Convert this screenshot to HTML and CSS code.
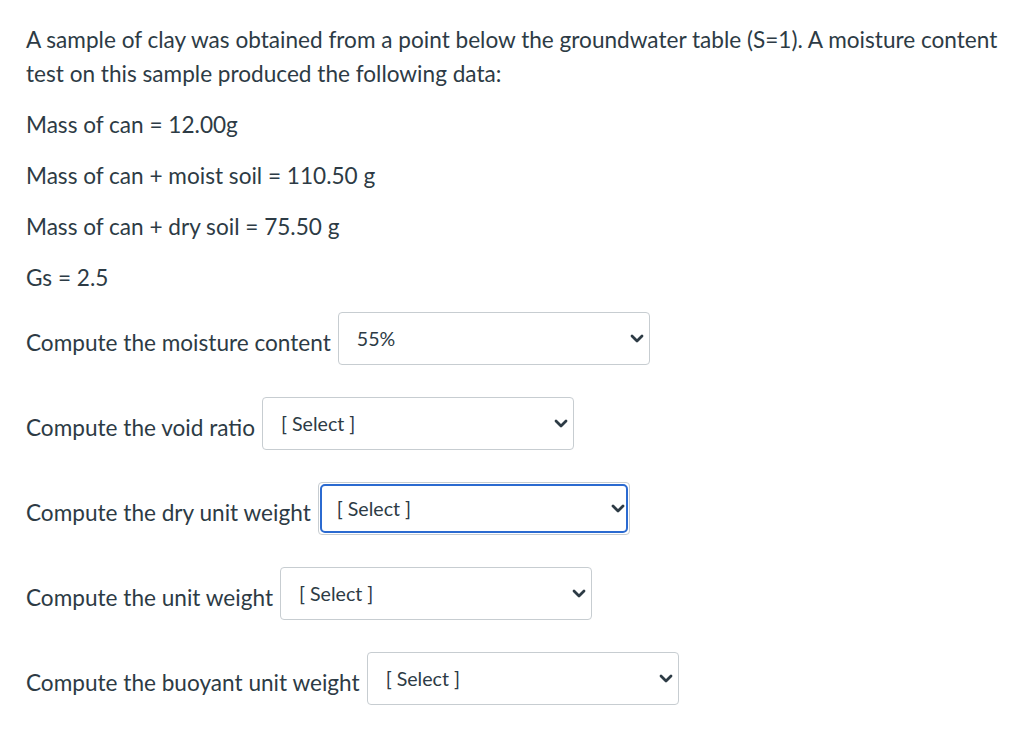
FILE: index.html
```html
<!DOCTYPE html>
<html lang="en">
<head>
<meta charset="utf-8">
<title>Question</title>
<link rel="stylesheet" href="styles.css">
</head>
<body>
<div class="question">
  <p class="para">A sample of clay was obtained from a point below the groundwater table (S=1). A moisture content test on this sample produced the following data:</p>
  <p class="para">Mass of can = 12.00g</p>
  <p class="para">Mass of can + moist soil = 110.50 g</p>
  <p class="para">Mass of can + dry soil = 75.50 g</p>
  <p class="para">Gs = 2.5</p>

  <div class="rows">
    <div class="row">
      <span class="label">Compute the moisture content</span>
      <div class="pick">
        <select class="sel"><option>55%</option></select>
        <svg class="chev" viewBox="0 0 14 9" width="14" height="9"><path d="M2 2 L7 7 L12 2" fill="none" stroke="#2d3b45" stroke-width="2.8" stroke-linecap="round" stroke-linejoin="round"/></svg>
      </div>
    </div>
    <div class="row">
      <span class="label">Compute the void ratio</span>
      <div class="pick">
        <select class="sel"><option>[ Select ]</option></select>
        <svg class="chev" viewBox="0 0 14 9" width="14" height="9"><path d="M2 2 L7 7 L12 2" fill="none" stroke="#2d3b45" stroke-width="2.8" stroke-linecap="round" stroke-linejoin="round"/></svg>
      </div>
    </div>
    <div class="row">
      <span class="label">Compute the dry unit weight</span>
      <div class="pick pick-focus">
        <select class="sel"><option>[ Select ]</option></select>
        <svg class="chev chev-focus" viewBox="0 0 14 9" width="14" height="9"><path d="M2 2 L7 7 L12 2" fill="none" stroke="#2d3b45" stroke-width="2.8" stroke-linecap="round" stroke-linejoin="round"/></svg>
      </div>
    </div>
    <div class="row">
      <span class="label">Compute the unit weight</span>
      <div class="pick">
        <select class="sel"><option>[ Select ]</option></select>
        <svg class="chev" viewBox="0 0 14 9" width="14" height="9"><path d="M2 2 L7 7 L12 2" fill="none" stroke="#2d3b45" stroke-width="2.8" stroke-linecap="round" stroke-linejoin="round"/></svg>
      </div>
    </div>
    <div class="row">
      <span class="label">Compute the buoyant unit weight</span>
      <div class="pick">
        <select class="sel"><option>[ Select ]</option></select>
        <svg class="chev" viewBox="0 0 14 9" width="14" height="9"><path d="M2 2 L7 7 L12 2" fill="none" stroke="#2d3b45" stroke-width="2.8" stroke-linecap="round" stroke-linejoin="round"/></svg>
      </div>
    </div>
  </div>
</div>
</body>
</html>
```

FILE: styles.css
```css
html, body {
  margin: 0;
  padding: 0;
  background: #ffffff;
}

body {
  font-family: Lato, "Liberation Sans", sans-serif;
  font-size: 22.6px;
  line-height: 34px;
  color: #2d3b45;
}

.question {
  padding: 23px 20px 0 26px;
}

.para {
  margin: 0 0 17px 0;
}

.rows {
  display: flex;
  flex-direction: column;
  gap: 32px;
  padding-top: 0;
}

.row {
  display: flex;
  align-items: center;
  gap: 7px;
  height: 53px;
}

.label {
  white-space: nowrap;
  padding-top: 9px;
}

.pick {
  position: relative;
  width: 312px;
  height: 53px;
}

.sel {
  appearance: none;
  -webkit-appearance: none;
  width: 100%;
  height: 100%;
  margin: 0;
  box-sizing: border-box;
  border: 1px solid #c7cdd1;
  border-radius: 4px;
  background: #ffffff;
  font-family: Lato, "Liberation Sans", sans-serif;
  font-size: 19.6px;
  color: #2d3b45;
  padding: 0 36px 1px 18px;
  outline: none;
}

.chev {
  position: absolute;
  right: 6px;
  top: 22px;
  pointer-events: none;
}

.pick-focus::after {
  content: "";
  position: absolute;
  left: 2px;
  top: 2px;
  right: 2px;
  bottom: 2px;
  border: 2px solid #2b6ad0;
  border-radius: 5px;
  pointer-events: none;
}

.chev-focus {
  right: 5px;
}
```
